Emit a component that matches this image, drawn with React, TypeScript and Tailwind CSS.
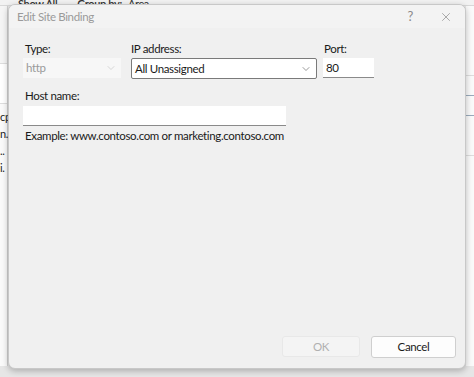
import { ChevronDown, X } from "lucide-react";

const font = { fontFamily: 'Lato, "Noto Sans", sans-serif' };

export default function App() {
  return (
    <div
      className="relative w-[474px] h-[377px] overflow-hidden bg-[#e6e6e6] text-[11.5px] tracking-[-0.35px] text-[#1a1a1a]"
      style={font}
    >
      {/* Background window (IIS Manager) */}
      <div className="absolute inset-0">
        <div className="h-[6px] bg-[#f2f2f2] border-b border-[#d8d8d8] flex items-end text-[11px] leading-none overflow-hidden">
          <span className="ml-[18px] -mb-[4px] font-semibold text-[#333]">Show All</span>
          <span className="ml-[20px] -mb-[4px] font-semibold text-[#333]">Group by:</span>
          <span className="ml-[6px] -mb-[4px] text-[#333]">Area</span>
        </div>
        <div className="absolute left-0 top-[6px] w-[8px] h-[360px] bg-[#fafafa] border-r border-[#d0d0d0] text-[11px] text-[#222]">
          <div className="h-[58px] border-b border-[#ddd] bg-[#f5f5f5]" />
          <div className="h-[40px] border-b border-[#ddd] bg-white" />
          <div className="pt-[4px] leading-[17px]">
            <div>cp</div>
            <div>n.</div>
            <div>..</div>
            <div>i.</div>
          </div>
        </div>
        <div className="absolute right-0 top-[6px] w-[8px] h-[360px] bg-[#fafafa] text-[11px]">
          <div className="h-[70px] border-b border-[#ddd]" />
          <div className="h-[20px] border-b border-[#9ab]" />
          <div className="h-[20px] border-b border-[#9ab]" />
          <div className="h-[40px] border-b border-[#ddd]" />
        </div>
      </div>

      {/* Dialog */}
      <div className="absolute left-[8px] top-[4px] w-[458px] h-[365px] rounded-[7px] border border-[#c8c8c8] bg-[#f0f0f0] shadow-[0_2px_6px_rgba(0,0,0,0.25)] flex flex-col overflow-hidden">
        <div className="h-[23px] flex items-center pl-[8px] bg-[#f3f3f3]">
          <span className="text-[11.5px] text-[#9a9a9a]">Edit Site Binding</span>
          <span className="ml-auto mr-[26px] text-[13px] text-[#8a8a8a]">?</span>
          <X className="mr-[12px] w-[14px] h-[14px] text-[#8a8a8a]" strokeWidth={1.2} />
        </div>

        <div className="flex-1 flex flex-col pl-[14px] pr-[9px] pt-[13px]">
          <div className="flex gap-[10px]">
            <div className="flex flex-col w-[98px]">
              <span className="leading-[16px] pl-[2px]">Type:</span>
              <div className="mt-[1px] h-[20px] bg-[#f7f7f7] flex items-center pl-[3px] pr-[4px] text-[#9a9a9a]">
                http
                <ChevronDown className="ml-auto w-[12px] h-[12px] text-[#c0c0c0]" strokeWidth={1.2} />
              </div>
            </div>
            <div className="flex flex-col w-[186px]">
              <span className="leading-[16px]">IP address:</span>
              <div className="mt-[1px] h-[21px] bg-white border border-[#7a7a7a] rounded-[2px] flex items-center pl-[3px] pr-[4px]">
                All Unassigned
                <ChevronDown className="ml-auto w-[12px] h-[12px] text-[#555]" strokeWidth={1.2} />
              </div>
            </div>
            <div className="flex flex-col w-[51px] -ml-[4px]">
              <span className="leading-[16px] pl-[1px]">Port:</span>
              <div className="mt-[1px] h-[20px] bg-white border-b border-[#8a8a8a] flex items-center pl-[3px]">
                80
              </div>
            </div>
          </div>

          <span className="mt-[9px] leading-[16px] pl-[2px]">Host name:</span>
          <div className="mt-[2px] w-[263px] h-[20px] bg-white border-b border-[#8a8a8a]" />
          <span className="mt-[2px] leading-[16px] pl-[2px]">
            Example: www.contoso.com or marketing.contoso.com
          </span>

          <div className="mt-auto mb-[10px] flex justify-end gap-[11px]">
            <div className="w-[78px] h-[21px] rounded-[3px] bg-[#f4f4f4] border border-[#e8e8e8] flex items-center justify-center text-[#b0b0b0]">
              OK
            </div>
            <div className="w-[85px] h-[22px] rounded-[3px] bg-[#fdfdfd] border border-[#cfcfcf] flex items-center justify-center">
              Cancel
            </div>
          </div>
        </div>
      </div>
    </div>
  );
}
